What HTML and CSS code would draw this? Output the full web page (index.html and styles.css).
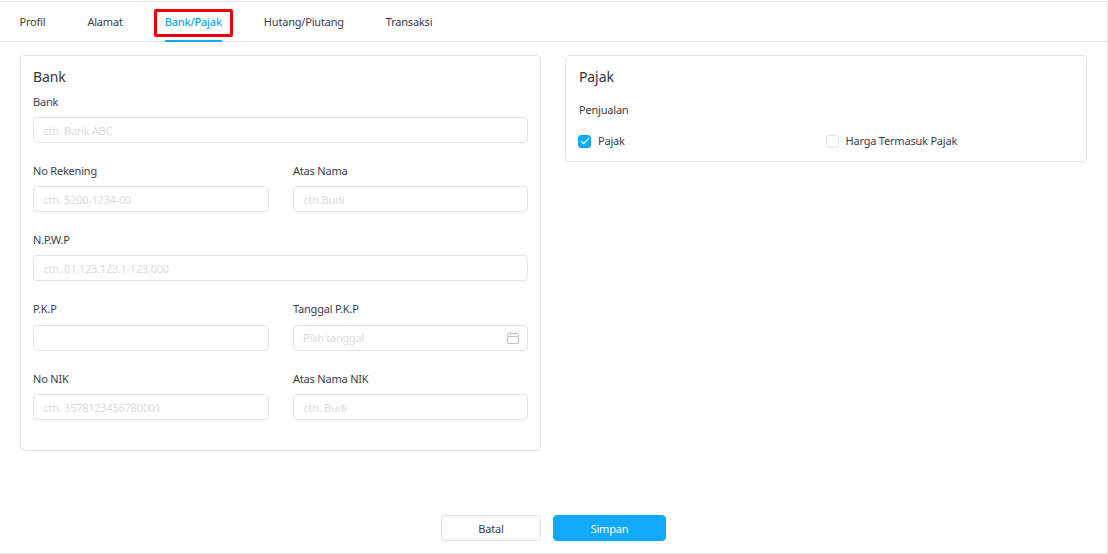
FILE: index.html
```html
<!DOCTYPE html>
<html lang="en">
  <head>
    <meta charset="UTF-8" />
    <title>Bank/Pajak</title>
    <link rel="stylesheet" href="styles.css">
  </head>
  <body>
    <div class="page">
      <div class="tabs">
        <a class="tab">Profil</a>
        <a class="tab">Alamat</a>
        <a class="tab active">Bank/Pajak<span class="highlight"></span></a>
        <a class="tab">Hutang/Piutang</a>
        <a class="tab">Transaksi</a>
      </div>

      <div class="content">
        <div class="card bank">
          <h3>Bank</h3>
          <div class="form">
            <div class="field wide">
              <label>Bank</label>
              <div class="input placeholder">cth. Bank ABC</div>
            </div>
            <div class="field">
              <label>No Rekening</label>
              <div class="input placeholder">cth. 5200-1234-00</div>
            </div>
            <div class="field">
              <label>Atas Nama</label>
              <div class="input placeholder">cth.Budi</div>
            </div>
            <div class="field wide">
              <label>N.P.W.P</label>
              <div class="input placeholder">cth. 01.123.123.1-123.000</div>
            </div>
            <div class="field">
              <label>P.K.P</label>
              <div class="input"></div>
            </div>
            <div class="field">
              <label>Tanggal P.K.P</label>
              <div class="input placeholder date">
                Pilih tanggal
                <svg class="calendar" width="14" height="14" viewBox="0 0 14 14" fill="none" stroke="#c9c4bc" stroke-width="1">
                  <rect x="1.5" y="2.5" width="11" height="10" rx="1.5" />
                  <path d="M1.5 5.5h11M4.5 1v2.5M9.5 1v2.5" />
                </svg>
              </div>
            </div>
            <div class="field">
              <label>No NIK</label>
              <div class="input placeholder">cth. 3578123456780001</div>
            </div>
            <div class="field">
              <label>Atas Nama NIK</label>
              <div class="input placeholder">cth. Budi</div>
            </div>
          </div>
        </div>

        <div class="card pajak">
          <h3>Pajak</h3>
          <div class="subtitle">Penjualan</div>
          <div class="checks">
            <div class="check">
              <span class="box checked">
                <svg width="10" height="8" viewBox="0 0 10 8" fill="none" stroke="#fff" stroke-width="1.2">
                  <path d="M1 4l2.6 2.6L9 1.2" />
                </svg>
              </span>
              Pajak
            </div>
            <div class="check">
              <span class="box"></span>
              Harga Termasuk Pajak
            </div>
          </div>
        </div>
      </div>

      <div class="actions">
        <button class="btn">Batal</button>
        <button class="btn primary">Simpan</button>
      </div>
    </div>
  </body>
</html>
```

FILE: styles.css
```css
* {
  box-sizing: border-box;
}

html, body {
  margin: 0;
  padding: 0;
  background: #fff;
}

body {
  font-family: "Noto Sans", sans-serif;
  font-size: 11px;
  letter-spacing: -0.2px;
  color: #3c3c46;
}

.page {
  width: 1108px;
  height: 553px;
  margin-top: 1px;
  display: flex;
  flex-direction: column;
  border-top: 1px solid #e3e3e3;
  border-bottom: 1px solid #e3e3e3;
  border-right: 1px solid #e3e3e3;
}

.tabs {
  display: flex;
  height: 40px;
  padding-left: 19.5px;
  gap: 42px;
  border-bottom: 1px solid #e3e3e3;
  flex-shrink: 0;
}

.tab {
  position: relative;
  line-height: 40px;
  white-space: nowrap;
}

.tab.active {
  color: #10a9ff;
  font-weight: 500;
}

.tab.active::after {
  content: "";
  position: absolute;
  left: 0;
  right: 0;
  bottom: -1px;
  height: 2px;
  background: #10a9ff;
}

.highlight {
  position: absolute;
  left: -11px;
  right: -11px;
  top: 7px;
  height: 28px;
  border: 3px solid #f00000;
  border-radius: 2px;
}

.content {
  flex: 1;
  display: flex;
  align-items: flex-start;
  gap: 24px;
  padding: 13px 20px 0;
}

.card {
  border: 1px solid #e3e3e3;
  border-radius: 5px;
  padding: 11px 12px 12px;
  width: 522px;
}

.card h3 {
  margin: 0;
  font-size: 14px;
  font-weight: 400;
  line-height: 19px;
  letter-spacing: -0.1px;
  color: #33333d;
}

.bank {
  width: 521px;
  height: 396px;
}

.form {
  display: grid;
  grid-template-columns: 236px 235px;
  column-gap: 24px;
  row-gap: 19.85px;
  margin-top: 7.6px;
}

.field.wide {
  grid-column: 1 / 3;
}

.field label {
  display: block;
  line-height: 16px;
  margin-bottom: 7.4px;
}

.input {
  height: 26px;
  border: 1px solid #e3e3e3;
  border-radius: 4px;
  padding: 0 9.5px;
  line-height: 25px;
  letter-spacing: -0.25px;
}

.placeholder {
  color: #dcdcdc;
}

.date {
  display: flex;
  justify-content: space-between;
  align-items: center;
  padding: 0 7px 0 9px;
}

.pajak {
  height: 107px;
  padding-left: 13px;
}

.subtitle {
  margin-top: 16px;
  line-height: 16px;
}

.checks {
  display: grid;
  grid-template-columns: 247.5px 1fr;
  margin-top: 15px;
  margin-left: -1px;
}

.check {
  display: flex;
  align-items: center;
  gap: 7px;
  line-height: 16px;
}

.box {
  width: 13px;
  height: 13px;
  border: 1px solid #e3e3e3;
  border-radius: 3px;
  display: flex;
  align-items: center;
  justify-content: center;
}

.box.checked {
  background: #10a9ff;
  border-color: #10a9ff;
}

.actions {
  display: flex;
  justify-content: center;
  gap: 12px;
  padding-bottom: 12px;
  padding-right: 1px;
}

.btn {
  width: 100px;
  height: 26px;
  border: 1px solid #e0e0e0;
  border-radius: 4px;
  background: #fff;
  color: #3c3c46;
  font-family: inherit;
  font-size: 11px;
  letter-spacing: -0.2px;
  padding: 0 0 0 1px;
}

.btn.primary {
  width: 113px;
  background: #10a9ff;
  border-color: #10a9ff;
  color: #fff;
}
```
